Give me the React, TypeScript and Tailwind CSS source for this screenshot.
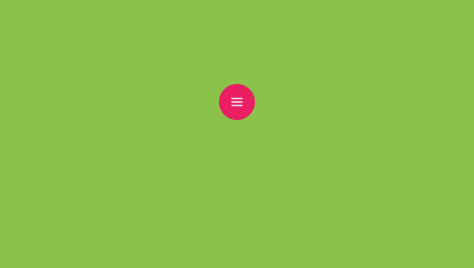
import React from "react";

export default function App() {
  return (
    <div className="flex h-[268px] w-full flex-col items-center bg-[#8bc34a] pt-[84px]">
      <button
        type="button"
        className="flex h-9 w-9 items-center justify-center rounded-full bg-[#e91e63]"
        aria-label="Menu"
      >
        <svg width="12" height="10" viewBox="0 0 12 10" fill="none">
          <path d="M0.5 1.5h11M0.5 5h11M0.5 8.5h11" stroke="#fce4ec" strokeWidth="1.4" />
        </svg>
      </button>
    </div>
  );
}
